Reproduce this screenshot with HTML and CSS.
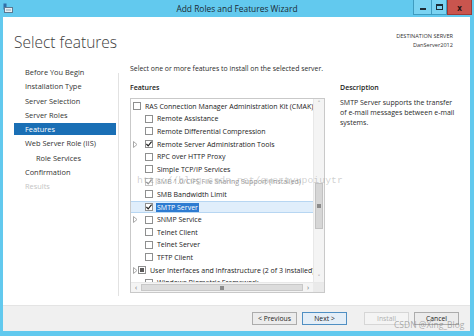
FILE: index.html
```html
<!DOCTYPE html>
<html lang="en">
<head>
	<meta charset="UTF-8">
	<title>Add Roles and Features Wizard</title>
	<link rel="stylesheet" href="styles.css">
</head>
<body>
	<div class="window">
		<div class="titlebar">
			<svg class="app-icon" width="10" height="10" viewBox="0 0 10 10">
				<rect x="0.5" y="0.5" width="3" height="6" fill="#2f6fa8"/>
				<rect x="1.5" y="4.5" width="8" height="5" fill="#e8eef3" stroke="#5b7a92" stroke-width="1"/>
				<rect x="3" y="6.5" width="5" height="1" fill="#8aa3b6"/>
			</svg>
			<div class="title">Add Roles and Features Wizard</div>
			<div class="controls">
				<span class="ctl ctl-min"><i></i></span>
				<span class="ctl ctl-max"><i></i></span>
				<span class="ctl ctl-close">x</span>
			</div>
		</div>

		<div class="frame">
			<div class="header">
				<h1>Select features</h1>
				<div class="dest">
					<div>DESTINATION SERVER</div>
					<div>DanServer2012</div>
				</div>
			</div>

			<div class="main">
				<ul class="nav">
					<li>Before You Begin</li>
					<li>Installation Type</li>
					<li>Server Selection</li>
					<li>Server Roles</li>
					<li class="active">Features</li>
					<li>Web Server Role (IIS)</li>
					<li class="sub">Role Services</li>
					<li>Confirmation</li>
					<li class="disabled">Results</li>
				</ul>
				<div class="divider"></div>

				<div class="content">
					<p class="intro">Select one or more features to install on the selected server.</p>
					<div class="columns">
						<div class="features">
							<h2>Features</h2>
							<div class="listbox">
								<div class="list-area">
									<ul class="items">
										<li><span class="exp"></span><span class="cb"></span><span class="label">RAS Connection Manager Administration Kit (CMAK)</span></li>
										<li><span class="exp"></span><span class="cb"></span><span class="label">Remote Assistance</span></li>
										<li><span class="exp"></span><span class="cb"></span><span class="label">Remote Differential Compression</span></li>
										<li><span class="exp"><svg width="5" height="7" viewBox="0 0 5 7"><path d="M0.5 0.5 L4 3.5 L0.5 6.5 Z" fill="none" stroke="#a8a8a8"/></svg></span><span class="cb"><svg width="8" height="8" viewBox="0 0 8 8"><path d="M1.4 4 L3.2 5.9 L6.6 1.6" fill="none" stroke="#222" stroke-width="1.2"/></svg></span><span class="label">Remote Server Administration Tools</span></li>
										<li><span class="exp"></span><span class="cb"></span><span class="label">RPC over HTTP Proxy</span></li>
										<li><span class="exp"></span><span class="cb"></span><span class="label">Simple TCP/IP Services</span></li>
										<li class="installed"><span class="exp"></span><span class="cb"><svg width="8" height="8" viewBox="0 0 8 8"><path d="M1.4 4 L3.2 5.9 L6.6 1.6" fill="none" stroke="#9a9a9a" stroke-width="1.2"/></svg></span><span class="label">SMB 1.0/CIFS File Sharing Support (Installed)</span></li>
										<li><span class="exp"></span><span class="cb"></span><span class="label">SMB Bandwidth Limit</span></li>
										<li class="selected"><span class="exp"></span><span class="cb"><svg width="8" height="8" viewBox="0 0 8 8"><path d="M1.4 4 L3.2 5.9 L6.6 1.6" fill="none" stroke="#222" stroke-width="1.2"/></svg></span><span class="label">SMTP Server</span></li>
										<li><span class="exp"><svg width="5" height="7" viewBox="0 0 5 7"><path d="M0.5 0.5 L4 3.5 L0.5 6.5 Z" fill="none" stroke="#a8a8a8"/></svg></span><span class="cb"></span><span class="label">SNMP Service</span></li>
										<li><span class="exp"></span><span class="cb"></span><span class="label">Telnet Client</span></li>
										<li><span class="exp"></span><span class="cb"></span><span class="label">Telnet Server</span></li>
										<li><span class="exp"></span><span class="cb"></span><span class="label">TFTP Client</span></li>
										<li><span class="exp"><svg width="5" height="7" viewBox="0 0 5 7"><path d="M0.5 0.5 L4 3.5 L0.5 6.5 Z" fill="none" stroke="#a8a8a8"/></svg></span><span class="cb cb-part"><i></i></span><span class="label">User Interfaces and Infrastructure (2 of 3 installed)</span></li>
										<li><span class="exp"></span><span class="cb"></span><span class="label">Windows Biometric Framework</span></li>
									</ul>
									<div class="vscroll">
										<span class="arrow">&#708;</span>
										<div class="vtrack"><div class="vthumb"><i></i></div></div>
										<span class="arrow">&#709;</span>
									</div>
								</div>
								<div class="hscroll">
									<span class="arrow">&lsaquo;</span>
									<div class="htrack"><div class="hthumb"><i></i></div></div>
									<span class="arrow">&rsaquo;</span>
									<span class="corner"></span>
								</div>
							</div>
						</div>

						<div class="desc">
							<h2>Description</h2>
							<p>SMTP Server supports the transfer of e-mail messages between e-mail systems.</p>
						</div>
					</div>
				</div>
			</div>

			<div class="footer">
				<button class="btn">&lt; Previous</button>
				<button class="btn btn-default">Next &gt;</button>
				<button class="btn btn-disabled">Install</button>
				<button class="btn">Cancel</button>
			</div>
		</div>

		<!-- watermarks from the source image -->
		<div class="wm wm-url">http://blog.csdn.net/qwertyupoiuytr</div>
		<div class="wm wm-csdn">CSDN @Xing_Blog</div>
	</div>
</body>
</html>
```

FILE: styles.css
```css
html, body, ul, li, p, h1, h2, div {
	margin: 0px;
	padding: 0px;
}
body {
	width: 474px;
	height: 336px;
	overflow: hidden;
	background: #62c9ee;
	font-family: "Open Sans", "Noto Sans", sans-serif;
	font-size: 7px;
	color: #1e1e1e;
}
ul {
	list-style: none;
}
.window {
	position: relative;
	height: 336px;
	display: flex;
	flex-direction: column;
}

/* title bar */
.titlebar {
	height: 17px;
	display: flex;
	align-items: center;
	position: relative;
}
.app-icon {
	margin-left: 3px;
	margin-top: -2px;
}
.title {
	flex: 1;
	text-align: center;
	font-size: 8.4px;
	color: #1a2a33;
	margin-left: 48px;
}
.controls {
	display: flex;
	align-self: flex-start;
	margin-right: 2px;
}
.ctl {
	height: 15px;
	display: flex;
	align-items: center;
	justify-content: center;
	border: 1px solid #3f9cc0;
	border-top: none;
	box-sizing: border-box;
	background: #7ad3f2;
}
.ctl-min {
	width: 19px;
}
.ctl-min i {
	width: 6px;
	height: 2px;
	margin-top: 3px;
	background: #1c2d38;
}
.ctl-max {
	width: 15px;
	border-left: none;
}
.ctl-max i {
	width: 5px;
	height: 3px;
	border: 1px solid #1c2d38;
	border-top-width: 2px;
}
.ctl-close {
	width: 25px;
	border: 1px solid #9c3a36;
	border-top: none;
	background: #c9554e;
	color: #2a1414;
	font-weight: bold;
	font-size: 8px;
}

/* white frame */
.frame {
	flex: 1;
	margin: 0px 4px 5px 3px;
	background: #ffffff;
	display: flex;
	flex-direction: column;
}
.header {
	height: 41px;
	display: flex;
	justify-content: space-between;
	align-items: flex-start;
	padding: 0px 17px 0px 11px;
	box-sizing: border-box;
}
.header h1 {
	font-weight: 300;
	font-size: 15.5px;
	line-height: 20px;
	margin-top: 15px;
	color: #3c3c3c;
}
.dest {
	margin-top: 15px;
	text-align: right;
	font-size: 5.6px;
	line-height: 9px;
	color: #333;
}

.main {
	flex: 1;
	display: flex;
	min-height: 0;
}
.nav {
	width: 102px;
	padding: 7px 2px 0px 11px;
}
.nav li {
	height: 14.3px;
	line-height: 14.3px;
	padding-left: 11px;
	font-size: 7.4px;
	color: #333;
}
.nav li.active {
	background: #1a6fb5;
	color: #ffffff;
	height: 12px;
	line-height: 12px;
	margin: 1px 0px 1.3px;
}
.nav li.sub {
	padding-left: 22px;
}
.nav li.disabled {
	color: #c4c4c4;
}
.divider {
	width: 1px;
	background: #e2e2e2;
	margin: 15px 0px 9px;
}

.content {
	flex: 1;
	padding: 6px 0px 0px 11px;
}
.intro {
	line-height: 10px;
	font-size: 6.9px;
	color: #2a2a2a;
}
.columns {
	display: flex;
	gap: 15px;
	margin-top: 9px;
}
.features {
	width: 195px;
}
h2 {
	font-size: 7px;
	font-weight: 600;
	line-height: 10px;
	margin-bottom: 5px;
	color: #222;
}

/* the feature list */
.listbox {
	height: 195px;
	border: 1px solid #c9c9c9;
	box-sizing: border-box;
	display: flex;
	flex-direction: column;
}
.list-area {
	flex: 1;
	display: flex;
	min-height: 0;
}
.items {
	flex: 1;
	overflow: hidden;
	padding-top: 1px;
}
.items li {
	height: 12.6px;
	display: flex;
	align-items: center;
	white-space: nowrap;
	box-sizing: border-box;
}
.exp {
	width: 14px;
	padding-left: 2px;
	box-sizing: border-box;
	display: flex;
	align-items: center;
}
.cb {
	width: 8px;
	height: 8px;
	border: 1px solid #8e8f8f;
	box-sizing: border-box;
	background: #ffffff;
	display: flex;
	align-items: center;
	justify-content: center;
	flex-shrink: 0;
}
.cb svg {
	flex-shrink: 0;
}
.cb-part i {
	width: 4px;
	height: 4px;
	background: #5a5a5a;
}
.label {
	margin-left: 3px;
	font-size: 7px;
	color: #222;
	padding: 0px 1px;
}
.installed .label {
	color: #9a9a9a;
}
.installed .cb {
	border-color: #c4c4c4;
}
.items li.selected {
	background: #e0eefb;
	border-top: 1px solid #b7d6f2;
	border-bottom: 1px solid #b7d6f2;
}
.selected .label {
	background: #2d7bd1;
	color: #ffffff;
}

.vscroll {
	width: 11px;
	display: flex;
	flex-direction: column;
	align-items: center;
	border-left: 1px solid #e8e8e8;
	box-sizing: border-box;
	background: #f4f4f4;
}
.arrow {
	font-size: 7px;
	line-height: 9px;
	color: #6a6a6a;
	width: 10px;
	text-align: center;
}
.vtrack {
	flex: 1;
	width: 100%;
	padding-top: 75px;
}
.vthumb {
	height: 44px;
	margin: 0px 1px;
	background: #d6d6d6;
	border: 1px solid #c2c2c2;
	display: flex;
	align-items: center;
	justify-content: center;
}
.vthumb i, .hthumb i {
	width: 4px;
	height: 4px;
	background: #8a8a8a;
}
.hscroll {
	height: 9px;
	display: flex;
	align-items: center;
	background: #f4f4f4;
	border-top: 1px solid #e8e8e8;
}
.htrack {
	flex: 1;
	height: 100%;
	padding: 1px 0px;
	box-sizing: border-box;
}
.hthumb {
	height: 100%;
	background: #dcdcdc;
	border: 1px solid #c8c8c8;
	box-sizing: border-box;
	display: flex;
	align-items: center;
	justify-content: center;
}
.corner {
	width: 11px;
	height: 100%;
	background: #eaeaea;
}

.desc {
	width: 116px;
}
.desc p {
	font-size: 7px;
	line-height: 10px;
	color: #2a2a2a;
}

/* footer with buttons */
.footer {
	height: 26px;
	background: #f0f0f0;
	border-top: 1px solid #e4e4e4;
	box-sizing: border-box;
	display: flex;
	align-items: center;
	justify-content: flex-end;
	padding-right: 11px;
	gap: 5px;
}
.btn {
	width: 45px;
	height: 13px;
	padding: 0px;
	font-family: "Open Sans", "Noto Sans", sans-serif;
	font-size: 6.8px;
	color: #222;
	background: #ececec;
	border: 1px solid #acacac;
	box-sizing: border-box;
}
.btn-default {
	border-color: #4f8fc3;
	background: #e4eef7;
}
.btn-disabled {
	margin-left: 12px;
	color: #b0b0b0;
	border-color: #d6d6d6;
	background: #f4f4f4;
}

/* watermarks baked into the source image */
.wm {
	position: absolute;
	white-space: nowrap;
	pointer-events: none;
}
.wm-url {
	left: 137px;
	top: 175px;
	font-family: "Liberation Mono", monospace;
	font-size: 9.8px;
	color: rgba(120, 120, 120, 0.35);
}
.wm-csdn {
	left: 394px;
	top: 319px;
	font-family: "Open Sans", sans-serif;
	font-size: 8.5px;
	color: rgba(110, 110, 110, 0.55);
}
```
